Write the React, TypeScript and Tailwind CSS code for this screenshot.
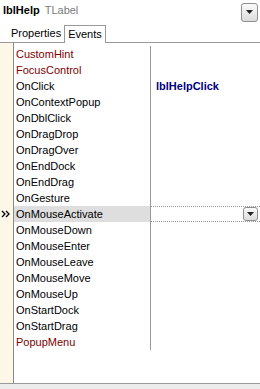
import { ReactNode } from "react";

const rows: { name: string; kind: "prop" | "event"; value?: string }[] = [
  { name: "CustomHint", kind: "prop" },
  { name: "FocusControl", kind: "prop" },
  { name: "OnClick", kind: "event", value: "lblHelpClick" },
  { name: "OnContextPopup", kind: "event" },
  { name: "OnDblClick", kind: "event" },
  { name: "OnDragDrop", kind: "event" },
  { name: "OnDragOver", kind: "event" },
  { name: "OnEndDock", kind: "event" },
  { name: "OnEndDrag", kind: "event" },
  { name: "OnGesture", kind: "event" },
  { name: "OnMouseActivate", kind: "event" },
  { name: "OnMouseDown", kind: "event" },
  { name: "OnMouseEnter", kind: "event" },
  { name: "OnMouseLeave", kind: "event" },
  { name: "OnMouseMove", kind: "event" },
  { name: "OnMouseUp", kind: "event" },
  { name: "OnStartDock", kind: "event" },
  { name: "OnStartDrag", kind: "event" },
  { name: "PopupMenu", kind: "prop" },
];

const selected = "OnMouseActivate";

const DropButton = ({ className }: { className?: string }): ReactNode => (
  <div
    className={`flex items-center justify-center rounded-[3px] border border-[#8f8f8f] bg-gradient-to-b from-[#fbfbfb] to-[#dcdcdc] ${className ?? ""}`}
  >
    <svg width="7" height="4" viewBox="0 0 7 4">
      <path d="M0 0h7L3.5 4z" fill="#222" />
    </svg>
  </div>
);

export default function App() {
  return (
    <div className="w-[260px] h-[389px] bg-white text-[11px] leading-none text-black overflow-hidden flex flex-col font-['Liberation_Sans',sans-serif]">
      <div className="h-[24px] flex items-center pl-[3px] pr-[2px] justify-between">
        <div className="flex items-baseline gap-[5px] -mt-[3px]">
          <span className="font-bold">lblHelp</span>
          <span className="text-[#7a7a7a]">TLabel</span>
        </div>
        <DropButton className="w-[17px] h-[19px]" />
      </div>
      <div className="h-[19px] flex items-end pl-[8px] border-b border-[#9a9a9a]">
        <div className="px-[3px] h-[17px] flex items-center">Properties</div>
        <div className="px-[3px] h-[18px] flex items-center border border-b-0 border-[#9a9a9a] bg-white -mb-px">Events</div>
      </div>
      <div className="flex-1 flex">
        <div className="w-[14px] bg-[#fdf7e8] border-r border-[#8a8a8a] pt-[3px]">
          {rows.map((r) => (
            <div key={r.name} className="h-[16px] flex items-center pl-px">
              {r.name === selected && (
                <svg width="11" height="8" viewBox="0 0 11 8">
                  <path d="M1 1l3 3-3 3M5 1l3 3-3 3" stroke="#000" strokeWidth="1.3" fill="none" />
                </svg>
              )}
            </div>
          ))}
        </div>
        <div className="flex-1 flex flex-col pt-[3px]">
          {rows.map((r) => {
            const sel = r.name === selected;
            return (
              <div key={r.name} className="h-[16px] flex">
                <div
                  className={`w-[137px] pl-[2px] flex items-center border-r border-[#9a9a9a] ${sel ? "bg-[#dedede]" : ""} ${r.kind === "prop" ? "text-[#800000]" : ""}`}
                >
                  {r.name}
                </div>
                <div
                  className={`flex-1 flex items-center justify-between pl-[5px] pr-[2px] ${sel ? "border-y border-dotted border-[#9a9a9a]" : ""}`}
                >
                  <span className="font-bold text-[#000080]">{r.value ?? ""}</span>
                  {sel && <DropButton className="w-[15px] h-[14px]" />}
                </div>
              </div>
            );
          })}
        </div>
      </div>
      <div className="h-[6px] bg-[#ececec] border-t border-[#9a9a9a]" />
    </div>
  );
}
